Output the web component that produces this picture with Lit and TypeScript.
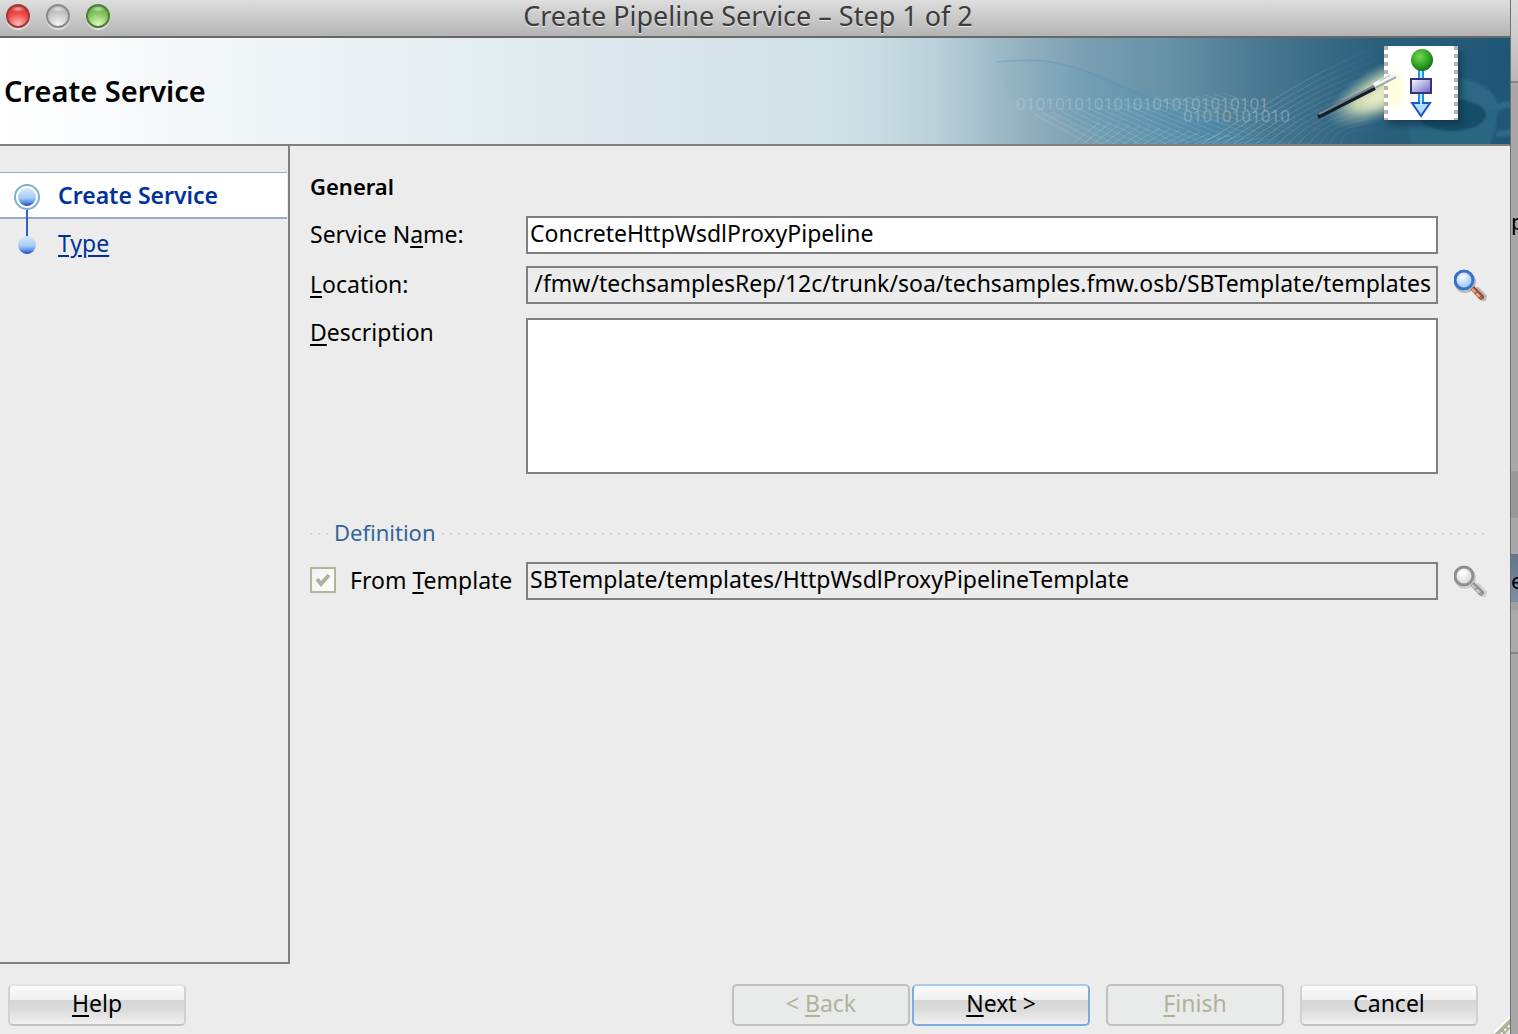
import { LitElement, html, svg, css } from "lit";
import { customElement, property } from "lit/decorators.js";

@customElement("search-icon")
class SearchIcon extends LitElement {
  @property({ type: Boolean }) muted = false;

  static styles = css`
    :host { display: block; line-height: 0; }
  `;

  render() {
    const c = this.muted
      ? { ring: "#8f8f8f", a: "#ffffff", b: "#d2d2d2", edge: "#8c8c8c", fill: "#c4c4c4", shade: "#cfcfcf" }
      : { ring: "#3c70c4", a: "#f2f9ff", b: "#8fc0fb", edge: "#94492a", fill: "#dba288", shade: "#b9b9b9" };
    return html`
      <svg width="36" height="36" viewBox="0 0 36 36" aria-hidden="true">
        <defs>
          <radialGradient id="lens" cx="0.4" cy="0.35" r="0.7">
            <stop offset="0" stop-color=${c.a}></stop>
            <stop offset="1" stop-color=${c.b}></stop>
          </radialGradient>
        </defs>
        <path d="M18 23 L28 33 L31 33 L32 29 L24 21 Z" fill=${c.shade} stroke=${c.shade} stroke-width="2"></path>
        <circle cx="11" cy="15" r="10" fill="none" stroke=${c.shade} stroke-width="2"></circle>
        <path d="M17 22 L20 19 L30 29 L30 31 L27 33 L25 32 L16 22 Z" fill=${c.edge}></path>
        <path d="M18 22 L27 31" stroke=${c.fill} stroke-width="3" stroke-dasharray="5 1"></path>
        <circle cx="10" cy="13" r="9" fill="url(#lens)" stroke=${c.ring} stroke-width="3"></circle>
        <path d="M5 12 a6 5 0 0 1 9 -3 a12 12 0 0 1 -9 3 z" fill="#fff" opacity="0.8"></path>
      </svg>`;
  }
}

@customElement("banner-art")
class BannerArt extends LitElement {
  static styles = css`
    :host { display: block; line-height: 0; }
    .bits { font-family: "Noto Sans", sans-serif; font-size: 17px; fill: #b9d3de; fill-opacity: 0.42; }
  `;

  private waves() {
    const out = [];
    for (let i = 0; i < 22; i++) {
      out.push(svg`<path d="M${84 + i * 9} ${76 - i} L${150 + i * 11} ${112 - i}"
        fill="none" stroke="url(#mesh)" stroke-opacity="0.22"></path>`);
      out.push(svg`<path d="M${120 + i * 10} 108 L${150 + i * 10} ${84 + i}"
        fill="none" stroke="url(#mesh)" stroke-opacity="0.28"></path>`);
    }
    for (let i = 0; i < 14; i++) {
      out.push(svg`<path d="M${248 + i * 11} 108 C${300 + i * 7} ${78 + i} ${350 + i * 4} ${40 + i * 4} ${424 + i * 2} ${10 + i * 6}"
        fill="none" stroke="url(#fade)" stroke-opacity="0.5"></path>`);
    }
    return out;
  }

  render() {
    return html`
      <svg width="560" height="106" viewBox="0 0 560 106" aria-hidden="true">
        <defs>
          <linearGradient id="fade" gradientUnits="userSpaceOnUse" x1="240" y1="0" x2="440" y2="0">
            <stop offset="0" stop-color="#a9cad8"></stop>
            <stop offset="0.5" stop-color="#7fb0c6" stop-opacity="0.8"></stop>
            <stop offset="1" stop-color="#5c8ea6" stop-opacity="0"></stop>
          </linearGradient>
          <linearGradient id="mesh" gradientUnits="userSpaceOnUse" x1="80" y1="0" x2="400" y2="0">
            <stop offset="0" stop-color="#d2e3ea"></stop>
            <stop offset="0.6" stop-color="#a9cad8"></stop>
            <stop offset="1" stop-color="#5c8ea6" stop-opacity="0"></stop>
          </linearGradient>
          <linearGradient id="swoosh" gradientUnits="userSpaceOnUse" x1="40" y1="0" x2="350" y2="0">
            <stop offset="0" stop-color="#6ba3c0" stop-opacity="0"></stop>
            <stop offset="0.35" stop-color="#5c9dbb" stop-opacity="0.28"></stop>
            <stop offset="0.7" stop-color="#4688ac" stop-opacity="0.5"></stop>
            <stop offset="1" stop-color="#34789b" stop-opacity="0.4"></stop>
          </linearGradient>
          <radialGradient id="glow">
            <stop offset="0" stop-color="#fffbd2" stop-opacity="0.95"></stop>
            <stop offset="0.5" stop-color="#dfe5bc" stop-opacity="0.75"></stop>
            <stop offset="1" stop-color="#a6c3b4" stop-opacity="0"></stop>
          </radialGradient>
          <radialGradient id="ball" cx="0.4" cy="0.35" r="0.7">
            <stop offset="0" stop-color="#74d957"></stop>
            <stop offset="0.6" stop-color="#2fa322"></stop>
            <stop offset="1" stop-color="#0d6a10"></stop>
          </radialGradient>
          <linearGradient id="box" x1="0" y1="0" x2="1" y2="1">
            <stop offset="0" stop-color="#ffffff"></stop>
            <stop offset="0.5" stop-color="#b5b1e6"></stop>
            <stop offset="1" stop-color="#6a62bc"></stop>
          </linearGradient>
          <filter id="soft" x="-20%" y="-20%" width="150%" height="150%">
            <feGaussianBlur stdDeviation="3"></feGaussianBlur>
          </filter>
          <filter id="blur" x="-20%" y="-20%" width="140%" height="140%">
            <feGaussianBlur stdDeviation="1"></feGaussianBlur>
          </filter>
        </defs>

        <path d="M40 24 C100 18 126 28 160 43 C200 61 240 76 280 87 S330 104 344 108 H166 C140 96 110 76 60 60 Z" fill="url(#swoosh)"></path>
        <path d="M46 24 C100 18 126 28 160 43 C200 61 240 76 280 87" fill="none" stroke="#4c93b8" stroke-opacity="0.3" stroke-width="2"></path>
        ${this.waves()}

        <text class="bits" x="66" y="72">01010101010101010101010101</text>
        <text class="bits" x="233" y="84">01010101010</text>

        <g filter="url(#blur)">
          <ellipse cx="502" cy="70" rx="46" ry="30" fill="#2d6884"></ellipse>
          <path d="M457 74 Q458 96 464 110 H538 Q546 96 548 72 Z" fill="#2a6682"></path>
          <path d="M547 70 C556 64 572 66 572 78 C572 92 560 96 546 96" fill="none" stroke="#2f6b88" stroke-width="6"></path>
          <ellipse cx="502" cy="77" rx="34" ry="16" fill="#184d69"></ellipse>
        </g>

        <ellipse cx="436" cy="52" rx="66" ry="26" fill="url(#glow)" transform="rotate(-28 436 52)"></ellipse>
        <ellipse cx="424" cy="62" rx="42" ry="15" fill="url(#glow)" opacity="0.55" transform="rotate(-12 424 62)"></ellipse>
        <rect x="438" y="13" width="74" height="74" fill="#0b3047" opacity="0.65" filter="url(#soft)"></rect>
        <rect x="434" y="8" width="74" height="74" fill="#fff"></rect>
        <ellipse cx="444" cy="52" rx="10" ry="18" fill="#fffcc0" opacity="0.5" filter="url(#soft)"></ellipse>
        <path d="M436 8 V82 M506 8 V82" stroke="#b5b5b5" stroke-width="4" stroke-dasharray="4 4"></path>

        <path d="M469 32 V64 M473 32 V64" stroke="#1e90ea" stroke-width="2"></path>
        <path d="M471 32 V64" stroke="#c4ecff" stroke-width="2"></path>
        <circle cx="472" cy="22" r="11" fill="url(#ball)"></circle>
        <rect x="461" y="41" width="20" height="14" fill="url(#box)" stroke="#333280" stroke-width="2"></rect>
        <path d="M462 65 H480 L471 78 Z" fill="#b4dcff" stroke="#1659c8" stroke-width="2"></path>
        <path d="M471 60 V67" stroke="#c4ecff" stroke-width="2"></path>

        <path d="M368 79 L425 50" stroke="#141c24" stroke-width="4"></path>
        <path d="M369 76 L424 48" stroke="#71838f" stroke-width="2"></path>
        <path d="M425 50 L446 39" stroke="#a4aaae" stroke-width="2"></path>
        <path d="M424 47 L445 36" stroke="#f3f4f4" stroke-width="4"></path>
        <path d="M430 43 L440 37" stroke="#b9bec2" stroke-width="1"></path>
      </svg>`;
  }
}

@customElement("app-root")
class AppRoot extends LitElement {
  static styles = css`
    :host {
      display: flex;
      min-height: 100vh;
      font-family: "Noto Sans", "Open Sans", sans-serif;
      font-size: 23px;
      line-height: 32px;
      color: #000;
      background: #a8a8a8;
    }
    * { box-sizing: border-box; }
    .window { flex: 1; min-width: 0; display: flex; flex-direction: column; background: #ececec; }

    .titlebar {
      display: grid; grid-template-columns: 1fr auto 1fr; align-items: center;
      height: 38px; padding: 0 20px 4px 6px;
      border-bottom: 2px solid #686868;
      background: linear-gradient(#dedede, #b4b4b4);
    }
    .lights { display: flex; gap: 16px; }
    .light {
      width: 24px; height: 24px; padding: 0; border-radius: 50%;
      border: 2px solid #777; box-shadow: 0 2px 1px #e2e2e2;
    }
    .red { border-color: #a03a3a; background: radial-gradient(ellipse 7px 3px at 50% 15%, #fff9, #fff0), radial-gradient(circle at 50% 95%, #ffc5c0, #ef4a47 55%, #c92a2a); }
    .gray { border-color: #8a8a8a; background: radial-gradient(ellipse 7px 3px at 50% 15%, #fff9, #fff0), radial-gradient(circle at 50% 95%, #f6f6f6, #c4c4c4 60%, #a6a6a6); }
    .green { border-color: #4d8037; background: radial-gradient(ellipse 7px 3px at 50% 15%, #fff9, #fff0), radial-gradient(circle at 50% 95%, #e9fbc5, #85c661 55%, #569a3c); }
    .title { margin: 0; font-size: 27px; font-weight: 400; color: #3c3c3c; text-shadow: 0 1px 0 #e6e6e6; }

    .banner {
      display: flex; align-items: center; justify-content: space-between;
      height: 108px; padding-left: 4px; overflow: hidden;
      border-bottom: 2px solid #808080;
      background: linear-gradient(to right, #fff 0, #edf3f6 20%, #dbe7ed 42%, #cddfe5 57%, #bad0da 62%, #97b5c2 67%, #7a9eb1 72%, #6490a5 78%, #47768f 84%, #2b607d 91%, #205675 100%);
    }
    .banner h2 { margin: 0; font-size: 29px; font-weight: 600; }

    .body { flex: 1; display: flex; }
    .steps {
      width: 290px; padding-top: 26px;
      border-right: 2px solid #808080; border-bottom: 2px solid #808080;
    }
    .steps ol { list-style: none; margin: 0; padding: 0 1px 0 0; }
    .step { display: flex; align-items: center; gap: 17px; padding-left: 13px; height: 48px; color: #003399; }
    .step.current {
      background: #fff; font-weight: 600; height: 47px;
      border-top: 1px solid #96a9c6; border-bottom: 2px solid #96a9c6;
    }
    .step a { color: inherit; text-decoration-thickness: 2px; text-underline-offset: 3px; }
    .step svg { overflow: visible; }

    .form { flex: 1; min-width: 0; padding: 24px 20px; }
    .form h3 { margin: 0 0 14px; font-size: 22px; font-weight: 600; line-height: 32px; }
    .grid { display: grid; grid-template-columns: 200px minmax(0, 1fr) 36px; column-gap: 16px; row-gap: 12px; align-items: center; }
    .grid label { padding-bottom: 2px; }
    .field {
      width: 100%; height: 38px; margin: 0; padding: 0 2px 4px; border: 2px solid #808080; border-radius: 0;
      background: #fff; font: inherit; color: #000; outline: none; display: block;
    }
    .field.flat { background: #ececec; }
    .field.path { text-align: right; padding-right: 5px; padding-left: 0; }
    textarea.field { height: 156px; resize: none; grid-column: 2; margin-top: 2px; }
    .top { align-self: start; }
    u { text-decoration-thickness: 2px; text-underline-offset: 3px; }
    .icon-button { border: 0; padding: 0; background: none; display: block; }

    .rule {
      display: flex; align-items: center; gap: 6px; margin: 42px 0 14px; color: #336699;
      font-size: 22px;
    }
    .dots { height: 2px; margin-top: 4px; flex: 1; background: repeating-linear-gradient(to right, #d2d2d2 0 2px, #ececec 2px 8px); }
    .dots.lead { flex: 0 0 18px; }
    .check { display: flex; align-items: center; gap: 14px; white-space: nowrap; }
    .check input {
      appearance: none; margin: 0; width: 26px; height: 26px; flex: none; border: 2px solid #b4b49c;
      background: linear-gradient(135deg, #f0f0f0, #fff);
    }
    .tick { display: grid; }
    .tick > * { grid-area: 1 / 1; }

    .footer { display: flex; align-items: flex-start; gap: 16px; padding: 20px 0 0 8px; height: 70px; }
    .push { margin-left: auto; }
    .btn {
      width: 178px; height: 42px; padding: 0 0 4px; font: inherit; color: #000;
      border: 2px solid #d0d0d0; border-top-color: #e4e4e4; border-bottom-color: #c2c2c2; border-radius: 5px;
      background: linear-gradient(#fbfbfb 0, #f0f0f0 36%, #d6d6d6 38%, #dadada 60%, #f0f0f0 100%);
    }
    .btn:disabled { color: #b2b29c; border-color: #bfc0c0; background: #e9ebea; }
    .btn.default { border-color: #7aace0; border-top-color: #a8cbee; }
    .pair { display: flex; gap: 2px; }
    .grip { align-self: flex-end; line-height: 0; }

    .behind { width: 8px; display: flex; flex-direction: column; overflow: hidden; border-left: 1px solid #707070; line-height: 28px; font-size: 22px; }
    .seg { flex: none; overflow: hidden; }
    .s1 { height: 83px; background: linear-gradient(#dcdcdc, #b8b8b8); border-bottom: 2px solid #868686; }
    .s2 { height: 388px; padding-top: 124px; }
    .s3 { height: 47px; background: #999; }
    .s4 { height: 36px; }
    .s5 { height: 48px; padding-top: 12px; background: linear-gradient(#64788c 0 6px, #7890a6); }
    .s6 { height: 52px; background: #aaa; border-bottom: 2px solid #888; border-top: 8px solid #a0a0a0; }
  `;

  render() {
    return html`
      <main class="window">
        <header class="titlebar">
          <div class="lights">
            <button class="light red" aria-label="Close"></button>
            <button class="light gray" aria-label="Minimize"></button>
            <button class="light green" aria-label="Zoom"></button>
          </div>
          <h1 class="title">Create Pipeline Service – Step 1 of 2</h1>
        </header>

        <div class="banner">
          <h2>Create Service</h2>
          <banner-art></banner-art>
        </div>

        <div class="body">
          <nav class="steps" aria-label="Steps">
            <ol>
              <li class="step current">
                <svg width="28" height="28" viewBox="0 0 28 28" aria-hidden="true">
                  <defs>
                    <linearGradient id="bead" x1="0" y1="0" x2="0" y2="1">
                      <stop offset="0" stop-color="#d9eafb"></stop>
                      <stop offset="0.55" stop-color="#a3cdf6"></stop>
                      <stop offset="0.8" stop-color="#5b8fe6"></stop>
                      <stop offset="1" stop-color="#1f3f9e"></stop>
                    </linearGradient>
                  </defs>
                  <path d="M14 28 V56" stroke="#2f5fcf" stroke-width="2"></path>
                  <circle cx="14" cy="16" r="12" fill="#fff" stroke="#7fb2ca" stroke-width="2"></circle>
                  <circle cx="14" cy="16" r="9" fill="url(#bead)"></circle>
                </svg>
                <span>Create Service</span>
              </li>
              <li class="step">
                <svg width="28" height="28" viewBox="0 0 28 28" aria-hidden="true">
                  <circle cx="14" cy="16" r="9" fill="url(#bead)"></circle>
                </svg>
                <a href="#type">Type</a>
              </li>
            </ol>
          </nav>

          <section class="form">
            <h3>General</h3>
            <div class="grid">
              <label for="name">Service N<u>a</u>me:</label>
              <input class="field" id="name" type="text" .value=${"ConcreteHttpWsdlProxyPipeline"} />
              <span></span>
              <label for="location"><u>L</u>ocation:</label>
              <input class="field flat path" id="location" type="text" readonly
                .value=${"/fmw/techsamplesRep/12c/trunk/soa/techsamples.fmw.osb/SBTemplate/templates"} />
              <button class="icon-button" aria-label="Browse location"><search-icon></search-icon></button>
              <label class="top" for="description"><u>D</u>escription</label>
              <textarea class="field" id="description"></textarea>
            </div>

            <div class="rule">
              <span class="dots lead"></span>
              <span>Definition</span>
              <span class="dots"></span>
            </div>

            <div class="grid">
              <label class="check" for="from">
                <span class="tick">
                  <input id="from" type="checkbox" checked disabled />
                  <svg width="26" height="26" viewBox="0 0 26 26" aria-hidden="true">
                    <path d="M7 12 L11 17 L19 8" fill="none" stroke="#b2b29c" stroke-width="4"></path>
                  </svg>
                </span>
                <span>From <u>T</u>emplate</span>
              </label>
              <input class="field flat" type="text" readonly aria-label="Template"
                .value=${"SBTemplate/templates/HttpWsdlProxyPipelineTemplate"} />
              <button class="icon-button" aria-label="Browse template" disabled><search-icon muted></search-icon></button>
            </div>
          </section>
        </div>

        <footer class="footer">
          <button class="btn"><u>H</u>elp</button>
          <div class="pair push">
            <button class="btn" disabled>&lt; <u>B</u>ack</button>
            <button class="btn default"><u>N</u>ext &gt;</button>
          </div>
          <button class="btn" disabled><u>F</u>inish</button>
          <button class="btn">Cancel</button>
          <span class="grip">
            <svg width="16" height="18" viewBox="0 0 16 18" aria-hidden="true">
              <path d="M0 18 L16 2 V13 L11 18 Z" fill="#b2b29c"></path>
              <path d="M0 17 L16 1" stroke="#fff" stroke-width="2"></path>
              <path d="M7 18 L16 9" stroke="#fff" stroke-width="2" stroke-dasharray="2 3"></path>
            </svg>
          </span>
        </footer>
      </main>
      <aside class="behind" aria-hidden="true">
        <div class="seg s1"></div>
        <div class="seg s2">p</div>
        <div class="seg s3"></div>
        <div class="seg s4"></div>
        <div class="seg s5">e</div>
        <div class="seg s6"></div>
      </aside>
    `;
  }
}
